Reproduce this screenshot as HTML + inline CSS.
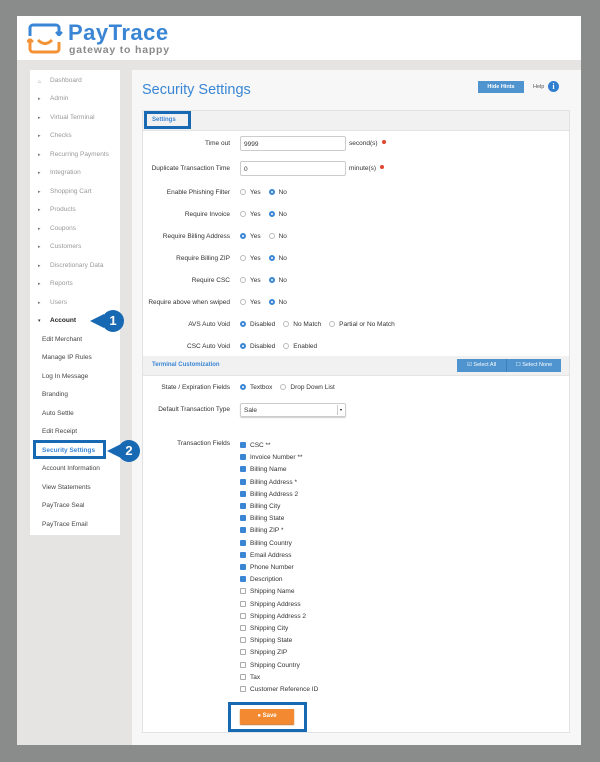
<!DOCTYPE html>
<html><head><style>
*{margin:0;padding:0;box-sizing:border-box}
body{width:600px;height:762px;background:#8a8c8c;position:relative;font-family:"Liberation Sans",sans-serif;overflow:hidden}
.a{position:absolute}
.frame{left:17px;top:16px;width:564px;height:729px;background:#e5e4e2}
.hdr{left:17px;top:16px;width:564px;height:44px;background:#fff}
.side{left:30px;top:70px;width:90px;height:465px;background:#fff}
.si{position:absolute;left:40px;font-size:6.5px;color:#999;white-space:nowrap;line-height:8px}
.si2{position:absolute;left:42px;font-size:6.5px;color:#444;white-space:nowrap;line-height:8px}
.tri{position:absolute;left:38px;font-size:5px;color:#777}
.main{left:132px;top:70px;width:449px;height:675px;background:#f7f7f7}
.panel{left:142px;top:110px;width:428px;height:623px;background:#fff;border:1px solid #e2e2e2}
.lbl{position:absolute;right:370px;font-size:6.5px;color:#333;white-space:nowrap;line-height:8px;text-align:right}
.ctl{position:absolute;left:240px;font-size:6.5px;color:#333;white-space:nowrap;line-height:8px}
.r{display:inline-block;width:6px;height:6px;border-radius:50%;border:1px solid #bbb;vertical-align:-1px;margin-right:4px}
.r.on{border:2px solid #3a86d4;background:#fff}
.cb{display:inline-block;width:6px;height:6px;border:1px solid #aaa;border-radius:1px;vertical-align:-1px;margin-right:4px}
.cb.on{background:#3a86d4;border-color:#3a86d4}
.sp{margin-left:8px}
.inp{position:absolute;left:240px;width:106px;height:15px;border:1px solid #ccc;border-radius:2px;font-size:6.5px;padding:4px 3px;color:#333}
.dot{display:inline-block;width:4px;height:4px;border-radius:50%;background:#e0452e;margin-left:4px;vertical-align:1px}
.band{left:143px;width:426px;background:#f1f1f1;border-bottom:1px solid #e4e4e4}
.bubble{position:absolute;z-index:5;width:22px;height:22px;border-radius:50%;background:#1869b3;color:#fff;font-weight:bold;font-size:13px;text-align:center;line-height:22px}
.arr{position:absolute;z-index:5;width:0;height:0;border-top:7px solid transparent;border-bottom:7px solid transparent;border-right:14px solid #1869b3;margin-top:-7px}
</style></head><body>
<div class="a frame"></div>
<div class="a hdr"></div>
<svg class="a" style="left:27px;top:22px" width="36" height="34" viewBox="0 0 36 34">
<path d="M3 14 V6 a3 3 0 0 1 3-3 H29 a3 3 0 0 1 3 3 V14" fill="none" stroke="#3a86d4" stroke-width="3"/>
<path d="M32 13 l-3 -3 M32 13 l3 -3" stroke="#3a86d4" stroke-width="2.5"/>
<path d="M3 17 V27 a3 3 0 0 0 3 3 H29 a3 3 0 0 0 3-3 V20" fill="none" stroke="#f39237" stroke-width="3"/>
<path d="M3 17 l-3 3 M3 17 l3 3" stroke="#f39237" stroke-width="2.5"/>
<path d="M11 18 q7 7 14 0" fill="none" stroke="#f39237" stroke-width="3"/>
</svg>
<div class="a" style="left:68px;top:20px;font-size:22px;font-weight:bold;color:#3a86d4;letter-spacing:0.5px">PayTrace</div>
<div class="a" style="left:69px;top:44px;font-size:10.5px;font-weight:bold;color:#8a8a8a;letter-spacing:0.8px">gateway to happy</div>

<div class="a side"></div>
<div class="tri" style="top:79px">⌂</div><div class="si" style="top:77px;left:50px">Dashboard</div>
<div class="tri" style="top:96px">▸</div><div class="si" style="top:95px;left:50px">Admin</div>
<div class="tri" style="top:115px">▸</div><div class="si" style="top:114px;left:50px">Virtual Terminal</div>
<div class="tri" style="top:133px">▸</div><div class="si" style="top:132px;left:50px">Checks</div>
<div class="tri" style="top:152px">▸</div><div class="si" style="top:151px;left:50px">Recurring Payments</div>
<div class="tri" style="top:170px">▸</div><div class="si" style="top:169px;left:50px">Integration</div>
<div class="tri" style="top:189px">▸</div><div class="si" style="top:188px;left:50px">Shopping Cart</div>
<div class="tri" style="top:207px">▸</div><div class="si" style="top:206px;left:50px">Products</div>
<div class="tri" style="top:226px">▸</div><div class="si" style="top:225px;left:50px">Coupons</div>
<div class="tri" style="top:244px">▸</div><div class="si" style="top:243px;left:50px">Customers</div>
<div class="tri" style="top:263px">▸</div><div class="si" style="top:262px;left:50px">Discretionary Data</div>
<div class="tri" style="top:281px">▸</div><div class="si" style="top:280px;left:50px">Reports</div>
<div class="tri" style="top:300px">▸</div><div class="si" style="top:299px;left:50px">Users</div>
<div class="tri" style="top:318px;color:#333">▾</div><div class="si" style="top:317px;left:50px;color:#222;font-weight:bold">Account</div>
<div class="si2" style="top:336px">Edit Merchant</div>
<div class="si2" style="top:354px">Manage IP Rules</div>
<div class="si2" style="top:373px">Log In Message</div>
<div class="si2" style="top:391px">Branding</div>
<div class="si2" style="top:410px">Auto Settle</div>
<div class="si2" style="top:428px">Edit Receipt</div>
<div class="a" style="left:33px;top:440px;width:73px;height:19px;border:3px solid #1869b3"></div>
<div class="si2" style="top:447px;color:#3a86d4;font-weight:bold">Security Settings</div>
<div class="si2" style="top:465px">Account Information</div>
<div class="si2" style="top:484px">View Statements</div>
<div class="si2" style="top:502px">PayTrace Seal</div>
<div class="si2" style="top:521px">PayTrace Email</div>

<div class="a main"></div>
<div class="a" style="left:142px;top:82px;font-size:14.5px;color:#3a86d4">Security Settings</div>
<div class="a" style="left:478px;top:81px;width:46px;height:12px;background:#4f94cf;color:#fff;font-size:5.5px;font-weight:bold;text-align:center;line-height:12px">Hide Hints</div>
<div class="a" style="left:533px;top:84px;font-size:5.5px;color:#555">Help</div>
<div class="a" style="left:548px;top:81px;width:11px;height:11px;border-radius:50%;background:#2f80d0;color:#fff;font-size:8px;font-weight:bold;text-align:center;line-height:11px;font-family:'Liberation Serif',serif">i</div>
<div class="a panel"></div>
<div class="a band" style="top:111px;height:20px"></div>
<div class="a" style="left:144px;top:111px;width:47px;height:18px;border:3px solid #1869b3;background:#f1f1f1;font-size:6px;font-weight:bold;color:#3a86d4;padding:3px 0 0 5px">Settings</div>

<div class="lbl" style="top:140px">Time out</div><div class="inp" style="top:136px">9999</div><div class="ctl" style="left:349px;top:140px">second(s)<span class="dot"></span></div>
<div class="lbl" style="top:165px">Duplicate Transaction Time</div><div class="inp" style="top:161px">0</div><div class="ctl" style="left:349px;top:165px">minute(s)<span class="dot"></span></div>
<div class="lbl" style="top:189px">Enable Phishing Filter</div><div class="ctl" style="top:189px"><span class="r"></span>Yes<span class="r on sp"></span>No</div>
<div class="lbl" style="top:211px">Require Invoice</div><div class="ctl" style="top:211px"><span class="r"></span>Yes<span class="r on sp"></span>No</div>
<div class="lbl" style="top:233px">Require Billing Address</div><div class="ctl" style="top:233px"><span class="r on"></span>Yes<span class="r sp"></span>No</div>
<div class="lbl" style="top:255px">Require Billing ZIP</div><div class="ctl" style="top:255px"><span class="r"></span>Yes<span class="r on sp"></span>No</div>
<div class="lbl" style="top:277px">Require CSC</div><div class="ctl" style="top:277px"><span class="r"></span>Yes<span class="r on sp"></span>No</div>
<div class="lbl" style="top:299px">Require above when swiped</div><div class="ctl" style="top:299px"><span class="r"></span>Yes<span class="r on sp"></span>No</div>
<div class="lbl" style="top:321px">AVS Auto Void</div><div class="ctl" style="top:321px"><span class="r on"></span>Disabled<span class="r sp"></span>No Match<span class="r sp"></span>Partial or No Match</div>
<div class="lbl" style="top:343px">CSC Auto Void</div><div class="ctl" style="top:343px"><span class="r on"></span>Disabled<span class="r sp"></span>Enabled</div>

<div class="a band" style="top:356px;height:20px"></div>
<div class="a" style="left:152px;top:362px;font-size:6px;font-weight:bold;color:#3a86d4">Terminal Customization</div>
<div class="a" style="left:457px;top:359px;width:104px;height:13px;background:#4f94cf"></div>
<div class="a" style="left:506px;top:359px;width:1px;height:13px;background:#3f7fb8"></div>
<div class="a" style="left:457px;top:362px;width:49px;text-align:center;font-size:5.5px;color:#fff">☑ Select All</div>
<div class="a" style="left:507px;top:362px;width:54px;text-align:center;font-size:5.5px;color:#fff">☐ Select None</div>

<div class="lbl" style="top:384px">State / Expiration Fields</div><div class="ctl" style="top:384px"><span class="r on"></span>Textbox<span class="r sp"></span>Drop Down List</div>
<div class="lbl" style="top:406px">Default Transaction Type</div>
<div class="inp" style="top:403px;height:14px;padding-top:3px;box-shadow:0 1px 1px #ccc">Sale</div>
<div class="a" style="left:337px;top:405px;width:7px;height:10px;border-left:1px solid #ccc;font-size:4px;text-align:center;line-height:10px">▾</div>

<div class="lbl" style="top:440px">Transaction Fields</div>
<div class="ctl" style="top:440px;line-height:12.2px">
<div><span class="cb on"></span>CSC **</div>
<div><span class="cb on"></span>Invoice Number **</div>
<div><span class="cb on"></span>Billing Name</div>
<div><span class="cb on"></span>Billing Address *</div>
<div><span class="cb on"></span>Billing Address 2</div>
<div><span class="cb on"></span>Billing City</div>
<div><span class="cb on"></span>Billing State</div>
<div><span class="cb on"></span>Billing ZIP *</div>
<div><span class="cb on"></span>Billing Country</div>
<div><span class="cb on"></span>Email Address</div>
<div><span class="cb on"></span>Phone Number</div>
<div><span class="cb on"></span>Description</div>
<div><span class="cb"></span>Shipping Name</div>
<div><span class="cb"></span>Shipping Address</div>
<div><span class="cb"></span>Shipping Address 2</div>
<div><span class="cb"></span>Shipping City</div>
<div><span class="cb"></span>Shipping State</div>
<div><span class="cb"></span>Shipping ZIP</div>
<div><span class="cb"></span>Shipping Country</div>
<div><span class="cb"></span>Tax</div>
<div><span class="cb"></span>Customer Reference ID</div>
</div>

<div class="a" style="left:228px;top:702px;width:79px;height:30px;border:3px solid #1869b3;background:#fff"></div>
<div class="a" style="left:240px;top:709px;width:54px;height:15px;background:#f38a31;color:#fff;font-size:6px;font-weight:bold;text-align:center;line-height:15px;box-shadow:0 1px 1px #c86a1d">● Save</div>

<div class="arr" style="left:90px;top:321px"></div>
<div class="bubble" style="left:102px;top:310px">1</div>
<div class="arr" style="left:107px;top:451px"></div>
<div class="bubble" style="left:118px;top:440px">2</div>
</body></html>
